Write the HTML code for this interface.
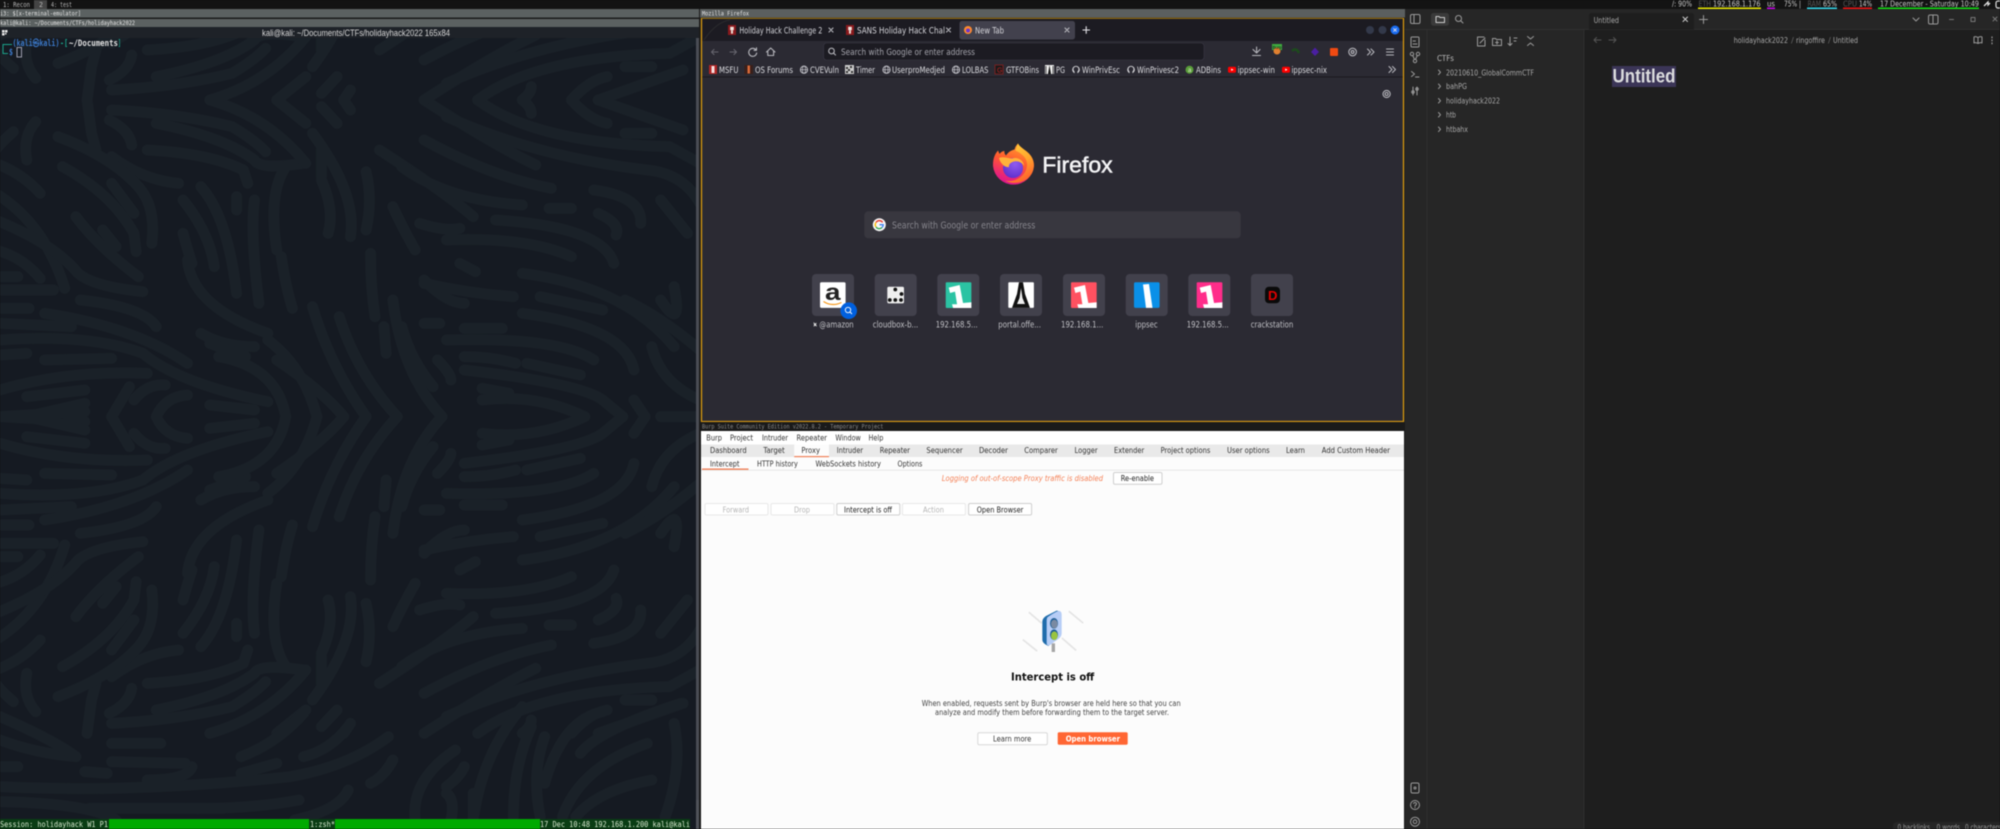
<!DOCTYPE html>
<html><head><meta charset="utf-8"><title>Desktop</title>
<style>
html,body{margin:0;padding:0;width:2000px;height:829px;overflow:hidden;background:#111}
svg{display:block;filter:blur(.4px)}
text{white-space:pre;font-family:"Liberation Sans",sans-serif}
.m{font-family:"DejaVu Sans Mono","Liberation Mono",monospace}
.d{font-family:"DejaVu Sans","Liberation Sans",sans-serif}
.fp path{fill:none;stroke:#1a2128;stroke-width:11;stroke-linecap:round;stroke-linejoin:round;vector-effect:non-scaling-stroke}
.ic{fill:none;stroke:#b5b5bb;stroke-width:1.1;stroke-linecap:round;stroke-linejoin:round}
.ob{fill:none;stroke:#9a9a9a;stroke-width:1;stroke-linecap:round;stroke-linejoin:round}
</style></head><body>
<svg width="2000" height="829" viewBox="0 0 2000 829" xmlns="http://www.w3.org/2000/svg">
<defs>
<clipPath id="tc"><rect x="0" y="38" width="696" height="782"/></clipPath>
<linearGradient id="ffb" x1="0.7" y1="0" x2="0.35" y2="1"><stop offset="0" stop-color="#ffa62f"/><stop offset=".45" stop-color="#ff5a2e"/><stop offset=".85" stop-color="#e8227a"/><stop offset="1" stop-color="#d9168f"/></linearGradient>
<linearGradient id="ffy" x1="0" y1="0" x2="0.4" y2="1"><stop offset="0" stop-color="#ffd23f"/><stop offset=".6" stop-color="#ffa52c"/><stop offset="1" stop-color="#ff6a2c"/></linearGradient>
<radialGradient id="ffp" cx=".6" cy=".3" r=".8"><stop offset="0" stop-color="#8f5bf0"/><stop offset="1" stop-color="#5a2bc8"/></radialGradient>
<g id="one"><path d="M9,16 L42,8 L52,62 L77,60 L77,77 L22,77 L19,66 L34,66 L28,28 L13,32 Z" fill="#fff"/></g>
<g id="globe"><circle cx="4" cy="4" r="3.6" fill="none" stroke="#c9c9cf" stroke-width=".9"/><ellipse cx="4" cy="4" rx="1.6" ry="3.6" fill="none" stroke="#c9c9cf" stroke-width=".7"/><path d="M.4,4H7.6" stroke="#c9c9cf" stroke-width=".7"/></g>
<g id="gh"><circle cx="4" cy="4" r="3.8" fill="#d5d5d8"/><circle cx="4" cy="3.6" r="2.5" fill="#2b2a33"/><rect x="2.6" y="5.2" width="2.8" height="3" fill="#2b2a33"/></g>
<g id="yt"><rect x="0" y="1" width="8" height="6" rx="1.5" fill="#f00"/><path d="M3.2,2.8 L5.6,4 L3.2,5.2Z" fill="#fff"/></g>
<g id="sans"><rect width="8" height="10" fill="#8a1a1d"/><rect x="2.2" y="1.8" width="3.6" height="3.4" fill="#f0e5e0"/><rect x="3" y="5.2" width="2" height="3.5" fill="#e8d8d0"/></g>
<g id="fp" class="fp">
<path d="M-10,190Q50,220 90,280"/><path d="M-10,280Q100,370 145,565"/><path d="M-10,360Q120,430 175,520Q210,560 320,575"/><path d="M-10,450Q50,470 90,535"/><path d="M195,0L205,100L215,150"/><path d="M80,65Q50,110 60,180"/><path d="M30,95Q0,130 -10,150"/><path d="M245,60Q290,90 295,135"/><path d="M250,30Q400,40 520,80Q570,120 595,155"/><path d="M350,70Q500,110 570,180Q580,210 680,190"/><path d="M330,150Q470,160 545,210L555,250"/><path d="M250,170Q320,240 400,250"/><path d="M130,110Q250,170 310,260Q350,320 340,430"/><path d="M140,200Q250,280 300,400L305,455"/><path d="M250,250L300,340"/><path d="M170,350Q220,440 310,530"/><path d="M230,390L260,440"/><path d="M410,300Q470,400 480,500"/><path d="M410,400Q420,450 430,490"/><path d="M450,260Q510,350 530,580"/><path d="M530,290L530,330"/><path d="M570,300Q560,400 580,610"/><path d="M640,200Q600,280 620,450"/><path d="M630,470Q640,560 655,625"/><path d="M720,150L720,230"/><path d="M720,240Q750,330 735,400"/><path d="M700,100Q800,280 785,410"/><path d="M820,215Q835,300 820,390"/><path d="M620,0L685,70"/><path d="M770,0L785,30"/><path d="M720,20L755,70"/><path d="M470,0Q600,50 685,190"/><path d="M880,320Q900,380 930,450"/><path d="M830,460Q830,560 840,650"/><path d="M860,680L865,760"/><path d="M950,0Q1100,130 1200,195"/><path d="M850,150Q1000,280 1060,350"/><path d="M1000,50Q1200,170 1450,210Q1530,220 1568,310"/><path d="M1070,0Q1200,130 1500,140L1568,190"/><path d="M950,120Q1100,230 1235,265"/><path d="M900,200Q1000,300 1170,315"/><path d="M940,370Q1000,395 1030,385"/><path d="M1110,360Q1350,380 1375,490"/><path d="M1000,420Q1180,410 1280,470"/><path d="M1230,325L1280,325"/><path d="M1330,270Q1440,290 1435,370"/><path d="M1340,340Q1390,370 1380,405"/><path d="M1480,300L1540,400"/><path d="M1170,0Q1190,20 1190,40"/><path d="M1280,0Q1320,60 1360,70"/><path d="M1340,0L1530,90"/><path d="M1400,100L1460,100"/><path d="M950,540Q1000,610 1040,610"/><path d="M950,550Q1050,580 1150,590"/><path d="M1170,520Q1400,560 1510,740"/><path d="M1210,590L1350,630"/><path d="M1170,640Q1400,680 1420,810"/><path d="M1000,720Q1250,710 1330,780"/><path d="M950,670L985,670"/><path d="M1040,685L1125,685"/><path d="M1040,770Q1100,770 1155,790"/><path d="M1180,790L1300,825"/><path d="M1040,810Q1300,850 1350,900L1395,950"/><path d="M1080,900Q1200,880 1310,950"/><path d="M1480,600Q1530,700 1510,560"/><path d="M1030,490L1065,515"/><path d="M1400,600Q1480,650 1568,750"/><path d="M1460,740Q1480,850 1568,900"/><path d="M1080,865L1140,880"/><path d="M1420,900L1445,950"/><path d="M1480,950L1568,950"/><path d="M700,620Q740,800 820,950"/><path d="M760,650Q800,820 890,950"/><path d="M620,780Q720,870 770,950"/><path d="M600,720Q680,800 710,950"/><path d="M880,600Q900,820 990,950"/><path d="M980,780Q1010,820 1010,840"/><path d="M900,680Q920,780 970,860"/><path d="M0,530L40,530"/><path d="M0,570L120,570"/><path d="M0,625L65,625"/><path d="M0,670L160,680"/><path d="M0,765L60,760"/><path d="M180,600Q320,620 350,680"/><path d="M100,640Q300,680 420,790"/><path d="M0,720Q200,700 320,760Q400,850 600,905"/><path d="M100,780L250,775"/><path d="M0,870Q150,810 330,820"/><path d="M60,890L190,870"/><path d="M60,950L190,910"/><path d="M300,900Q330,850 370,855"/><path d="M350,950Q370,890 420,885"/><path d="M250,950L290,860"/><path d="M470,915L570,930"/><path d="M420,480Q430,620 600,700"/><path d="M450,700Q500,740 570,740"/><path d="M470,730L550,770"/><path d="M490,770Q620,800 640,950"/><path d="M0,950L190,965"/>
</g>
</defs>

<!-- top i3 bar -->
<rect x="0" y="0" width="2000" height="9" fill="#131313"/>
<rect x="0" y="9" width="2000" height="820" fill="#1a1a1a"/>
<rect x="34" y="0" width="13" height="11" fill="#444"/><rect x="34" y="10" width="13" height="2" fill="#e0a020"/>
<rect x="0" y="0" width="34" height="11" fill="#131313"/><rect x="47" y="0" width="30" height="11" fill="#131313"/>
<g fill="#b5b5b5" font-size="7">
<text x="3" y="7" textLength="27" lengthAdjust="spacingAndGlyphs" class="m">1: Recon</text>
<text x="39" y="7" textLength="4" lengthAdjust="spacingAndGlyphs" class="m">2</text>
<text x="51" y="7" textLength="21" lengthAdjust="spacingAndGlyphs" class="m">4: test</text>
</g>
<g font-size="8" fill="#c8c8c8" class="d">
<text class="d" x="1672" y="6.5" textLength="20" lengthAdjust="spacingAndGlyphs">/: 90%</text>
<text class="d" x="1698.5" y="6.5" textLength="12.5" lengthAdjust="spacingAndGlyphs" fill="#555">ETH</text>
<text class="d" x="1713" y="6.5" textLength="47.5" lengthAdjust="spacingAndGlyphs">192.168.1.176</text>
<text class="d" x="1767" y="6.5" textLength="8" lengthAdjust="spacingAndGlyphs">us</text>
<text class="d" x="1784" y="6.5" textLength="17" lengthAdjust="spacingAndGlyphs">75% |</text>
<text class="d" x="1807.5" y="6.5" textLength="13.5" lengthAdjust="spacingAndGlyphs" fill="#555">RAM</text>
<text class="d" x="1823" y="6.5" textLength="14" lengthAdjust="spacingAndGlyphs">65%</text>
<text class="d" x="1843" y="6.5" textLength="14" lengthAdjust="spacingAndGlyphs" fill="#555">CPU</text>
<text class="d" x="1859" y="6.5" textLength="13" lengthAdjust="spacingAndGlyphs">14%</text>
<text class="d" x="1880" y="6.5" textLength="99" lengthAdjust="spacingAndGlyphs">17 December - Saturday 10:49</text>
</g>
<rect x="1698" y="7.5" width="63" height="1.5" fill="#e8e800"/>
<rect x="1767" y="7.5" width="8" height="1.5" fill="#c400e8"/>
<rect x="1807" y="7.5" width="30" height="1.5" fill="#33d4e8"/>
<rect x="1843" y="7.5" width="29" height="1.5" fill="#ee1111"/>
<rect x="1878" y="7.5" width="101" height="1.5" fill="#11dd11"/>
<path d="M1984,6L1988,2L1988,5L1990,3" stroke="#ddd" stroke-width="1.3" fill="none"/>
<rect x="1996" y="1" width="6" height="7" rx="2" fill="none" stroke="#ddd" stroke-width="1.2"/>

<!-- left terminal -->
<rect x="0" y="9" width="699" height="8.5" fill="#5b6161"/>
<text x="0" y="15.5" font-size="6.5" fill="#e3e3e3" class="m" textLength="81" lengthAdjust="spacingAndGlyphs">i3: $[x-terminal-emulator]</text>
<rect x="0" y="19" width="699" height="8" fill="#5b6161"/>
<text x="0" y="25" font-size="6.5" fill="#e3e3e3" class="m" textLength="135" lengthAdjust="spacingAndGlyphs">kali@kali: ~/Documents/CTFs/holidayhack2022</text>
<rect x="0" y="27" width="699" height="11" fill="#1e2228"/>
<rect x="0" y="38" width="699" height="782" fill="#151a22"/>
<g clip-path="url(#tc)">
<g transform="translate(0,100) scale(.44643,.33333)">
<use href="#fp"/>
<use href="#fp" transform="matrix(1 0 0 -1 0 1900)"/>
<use href="#fp" transform="matrix(1 0 0 -1 0 0)"/>
</g>
<g transform="translate(0,500) scale(.44643,.33333)" class="fp">
<path d="M0,860Q300,880 650,830Q780,800 870,710"/><path d="M1020,750Q920,840 930,960"/><path d="M1170,620Q1080,760 1060,960"/><path d="M1190,680Q1150,800 1150,950"/><path d="M1220,710Q1190,820 1210,950"/><path d="M1350,635Q1260,660 1220,850"/><path d="M1450,730Q1300,800 1260,950"/><path d="M1525,610Q1340,690 1300,760"/><path d="M1460,840Q1340,870 1290,950"/><path d="M1510,670Q1530,800 1490,950"/><path d="M680,640Q620,730 540,770"/><path d="M780,680Q740,750 680,770"/><path d="M620,790L540,820"/><path d="M430,800Q420,840 330,840"/><path d="M0,720Q80,760 170,770"/><path d="M0,650Q120,720 170,770"/><path d="M250,730L360,730"/><path d="M250,785L415,790"/><path d="M190,815L240,820"/><path d="M0,800L40,800"/><path d="M780,870Q760,930 660,960"/><path d="M670,900Q550,930 400,925"/><path d="M500,925L200,925"/><path d="M0,905Q200,910 260,960"/><path d="M1000,880Q1020,900 1010,960"/><path d="M1060,880L1060,960"/><path d="M1040,800Q1030,830 1000,860"/><path d="M880,780Q860,830 830,850"/>
</g>
</g>
<rect x="696" y="38" width="3" height="782" fill="#4a4d55"/>
<g fill="#e8e8e8"><rect x="2" y="30" width="2.5" height="2.5"/><rect x="5" y="30" width="2.5" height="2.5"/><rect x="2" y="33" width="2.5" height="2.5"/><rect x="5" y="33" width="1.5" height="1.5"/></g>
<text x="262" y="36" font-size="9" fill="#d6d6d6" textLength="188" lengthAdjust="spacingAndGlyphs">kali@kali: ~/Documents/CTFs/holidayhack2022 165x84</text>
<g font-size="8.5" class="m" font-weight="bold">
<text x="12.5" y="46" class="m" fill="#3b78c8" textLength="47" lengthAdjust="spacingAndGlyphs">(kali㉿kali)</text>
<text x="60" y="46" class="m" fill="#1aa38a" textLength="8" lengthAdjust="spacingAndGlyphs">-[</text>
<text x="69" y="46" class="m" fill="#e0e0e0" textLength="49" lengthAdjust="spacingAndGlyphs">~/Documents</text>
<text x="118" y="46" class="m" fill="#1aa38a" textLength="3" lengthAdjust="spacingAndGlyphs">]</text>
<text x="9" y="55" class="m" fill="#3b78c8" textLength="4" lengthAdjust="spacingAndGlyphs">$</text>
</g>
<path d="M3,49V44.5H12 M3,49V53.5H8" stroke="#1aa38a" stroke-width="1" fill="none"/>
<rect x="17" y="47.5" width="4.5" height="9.5" fill="none" stroke="#aab" stroke-width=".9"/>
<!-- tmux -->
<rect x="0" y="819" width="699" height="10" fill="#0a3d14"/>
<rect x="109" y="819" width="200" height="10" fill="#00aa00"/>
<rect x="335" y="819" width="205" height="10" fill="#00aa00"/>
<g font-size="7.5" fill="#d5e5cc">
<text x="0" y="827" class="m" textLength="108" lengthAdjust="spacingAndGlyphs">Session: holidayhack W1 P1</text>
<text x="310" y="827" class="m" textLength="25" lengthAdjust="spacingAndGlyphs">1:zsh*</text>
<text x="540" y="827" class="m" textLength="150" lengthAdjust="spacingAndGlyphs">17 Dec 10:48 192.168.1.200 kali@kali</text>
</g>
<rect x="690" y="819" width="9" height="10" fill="#151a22"/>
<rect x="696" y="800" width="3" height="29" fill="#50535a"/>

<!-- firefox -->
<rect x="700" y="9" width="705" height="8.5" fill="#5b5f5f"/>
<text x="702" y="15.5" font-size="6.5" fill="#e5e5e5" class="m" textLength="47" lengthAdjust="spacingAndGlyphs">Mozilla Firefox</text>
<rect x="701" y="18" width="703" height="403" fill="#2b2a33"/>
<rect x="701" y="18" width="703" height="23" fill="#1c1b22"/>
<path d="M704,40Q716,22 730,20" stroke="#2b2b2e" stroke-width="1" fill="none"/>
<rect x="701" y="41" width="703" height="20" fill="#2b2a33"/>
<rect x="701" y="61" width="703" height="16" fill="#2b2a33"/>
<rect x="701" y="76.5" width="703" height=".8" fill="#16151a"/>
<rect x="959.5" y="21" width="115.5" height="18.5" rx="2.5" fill="#42414d"/>
<use href="#sans" x="728" y="25"/><use href="#sans" x="846" y="25"/>
<circle cx="968" cy="30" r="4" fill="#ff8a2c"/><circle cx="968" cy="30.5" r="2" fill="#6a35d0"/>
<g font-size="9" fill="#d5d5da" class="d">
<text class="d" x="739.4" y="33.5" textLength="83" lengthAdjust="spacingAndGlyphs">Holiday Hack Challenge 2</text>
<text class="d" x="857" y="33.5" textLength="88" lengthAdjust="spacingAndGlyphs">SANS Holiday Hack Chal</text>
<text class="d" x="975" y="33.5" textLength="29" lengthAdjust="spacingAndGlyphs">New Tab</text>
</g>
<g class="ic" stroke-width=".9"><path d="M829,28L833,32M833,28L829,32M946.5,28L950.5,32M950.5,28L946.5,32M1065,28L1069,32M1069,28L1065,32"/></g>
<path d="M1082.5,30H1090M1086.2,26.2V33.8" stroke="#e4e4e8" stroke-width="1.1"/>
<circle cx="1370" cy="30" r="4" fill="#33394a"/><circle cx="1382.5" cy="30" r="4" fill="#33394a"/><circle cx="1395" cy="30" r="4.5" fill="#1a6cf0"/>
<path d="M1393.4,28.4L1396.6,31.6M1396.6,28.4L1393.4,31.6" stroke="#dde" stroke-width=".9"/>
<!-- nav -->
<g class="ic">
<path d="M718,52H711.5M714,49.5L711.5,52L714,54.5" stroke="#66656e"/>
<path d="M730,52H736.5M734,49.5L736.5,52L734,54.5" stroke="#66656e"/>
<path d="M756,50A4,4 0 1 0 756.7,53M756.5,47.8V50.3H754"/>
<path d="M766.5,52L770.7,48L775,52M767.8,51V55.5H773.6V51"/>
<path d="M1253,49.5L1256.6,53L1260,49.5M1256.6,47V53M1252.5,55.5H1260.5"/>
<circle cx="1352.6" cy="52" r="3.8"/><circle cx="1352.6" cy="52" r="1.4"/>
<path d="M1367.5,49L1370.5,52L1367.5,55M1371,49L1374,52L1371,55"/>
<path d="M1386.5,49H1393.5M1386.5,52H1393.5M1386.5,55H1393.5"/>
<path d="M1389,66.5L1392,69.5L1389,72.5M1392.5,66.5L1395.5,69.5L1392.5,72.5"/>
</g>
<rect x="823.6" y="43" width="380.4" height="17" rx="3" fill="#1c1b22" stroke="#3a3945" stroke-width=".6"/>
<g class="ic"><circle cx="831.5" cy="51" r="2.8"/><path d="M833.5,53L835.5,55"/></g>
<text class="d" x="841" y="55" font-size="9" fill="#a5a5ad" textLength="134" lengthAdjust="spacingAndGlyphs">Search with Google or enter address</text>
<rect x="1272" y="44" width="10" height="6" fill="#3faa3f"/><circle cx="1277" cy="51" r="3.5" fill="#e08030"/>
<text x="1272.5" y="49" font-size="4.5" fill="#111" textLength="9" lengthAdjust="spacingAndGlyphs">Burp</text>
<path d="M1292,51Q1296,47 1299,53" stroke="#1d4a1d" stroke-width="2.5" fill="none"/>
<path d="M1315,47.5L1319,52L1315,56L1311,52Z" fill="#4a1fa0"/>
<rect x="1330" y="48" width="8" height="8" rx="1" fill="#f04a12"/>
<!-- bookmarks -->
<g font-size="8.8" fill="#dcdce0">
<rect x="709" y="65" width="8" height="9" fill="#b02525"/><rect x="711.5" y="66" width="3" height="7" fill="#f5e0e0"/>
<text class="d" x="719" y="73" textLength="19.5" lengthAdjust="spacingAndGlyphs">MSFU</text>
<rect x="744.5" y="65" width="8.5" height="9" fill="#3a1f1a"/><rect x="747.5" y="65.5" width="2.5" height="8" fill="#d86a3a"/>
<text class="d" x="755" y="73" textLength="38" lengthAdjust="spacingAndGlyphs">OS Forums</text>
<use href="#globe" x="800" y="65.7"/><text class="d" x="810" y="73" textLength="29" lengthAdjust="spacingAndGlyphs">CVEVuln</text>
<rect x="845" y="65" width="9" height="9" fill="#ccc"/><path d="M846,67h2v2h-2zM850,66h2v2h-2zM848,69h2v2h-2zM851,71h2v2h-2zM846,71h2v2h-2z" fill="#333"/>
<text class="d" x="856" y="73" textLength="19" lengthAdjust="spacingAndGlyphs">Timer</text>
<use href="#globe" x="882.5" y="65.7"/><text class="d" x="892" y="73" textLength="53" lengthAdjust="spacingAndGlyphs">UserproMedjed</text>
<use href="#globe" x="952" y="65.7"/><text class="d" x="962" y="73" textLength="26.5" lengthAdjust="spacingAndGlyphs">LOLBAS</text>
<rect x="995" y="65" width="8" height="9" fill="#1a1a1a" stroke="#8a2020" stroke-width=".8"/><text x="997" y="72.5" font-size="7" fill="#b52020">G</text>
<text class="d" x="1006" y="73" textLength="33" lengthAdjust="spacingAndGlyphs">GTFOBins</text>
<rect x="1045" y="65" width="9" height="9" fill="#eee"/><path d="M1049.5,65L1048,74H1051Z" fill="#111"/><path d="M1046,66V74M1053,66V74" stroke="#111" stroke-width=".7"/>
<text class="d" x="1056" y="73" textLength="9" lengthAdjust="spacingAndGlyphs">PG</text>
<use href="#gh" x="1072" y="65.7"/><text class="d" x="1082" y="73" textLength="38" lengthAdjust="spacingAndGlyphs">WinPrivEsc</text>
<use href="#gh" x="1127" y="65.7"/><text class="d" x="1137" y="73" textLength="42" lengthAdjust="spacingAndGlyphs">WinPrivesc2</text>
<circle cx="1189.5" cy="69.7" r="4" fill="#5a9e3a"/><text x="1188" y="72" font-size="6" fill="#e0e8d0">a</text>
<text class="d" x="1196" y="73" textLength="25" lengthAdjust="spacingAndGlyphs">ADBins</text>
<use href="#yt" x="1228" y="65.7"/><text class="d" x="1237.6" y="73" textLength="37.4" lengthAdjust="spacingAndGlyphs">ippsec-win</text>
<use href="#yt" x="1282" y="65.7"/><text class="d" x="1291.5" y="73" textLength="35.5" lengthAdjust="spacingAndGlyphs">ippsec-nix</text>
</g>
<!-- gear -->
<g class="ic"><circle cx="1386.6" cy="94" r="3.6"/><circle cx="1386.6" cy="94" r="1.5"/></g>
<!-- logo -->
<path d="M993,165C993,158 995,154 998,150.5L999.5,154C1000.5,152.5 1002.5,151 1004.5,151C1004,153 1005,154.5 1006,155.5C1008,152.5 1010.5,150.5 1014.5,149.5C1015,147 1016.5,145 1018,143.5C1020,148 1027,150 1031,156C1033,159 1034,162 1034,166A20.6,20.6 0 0 1 993,166Z" fill="url(#ffb)"/>
<path d="M1018,143.5C1020,148 1028,151 1031.5,157C1035,163 1034.5,171 1030,176C1024,183 1013,185 1005,180.5C1015,183 1026,176 1027,166C1028,158 1021,153 1015.5,150.5Z" fill="url(#ffy)"/>
<circle cx="1013" cy="168" r="10" fill="url(#ffp)"/>
<path d="M999,158C1004,156 1008,158.5 1012,158.5C1018,156.5 1024,161 1024,166C1021,161 1016,160.5 1012.5,162C1010,163 1008.5,165 1009,167C1005,168 1000,163 999,158Z" fill="#ffb23a"/>
<text x="1042.3" y="172.7" font-size="22.5" fill="#f4f4f6" stroke="#f4f4f6" stroke-width=".5" textLength="70.4" lengthAdjust="spacingAndGlyphs">Firefox</text>
<!-- search -->
<rect x="864.3" y="211.3" width="376.4" height="27" rx="4" fill="#38373f"/>
<circle cx="879.3" cy="224.7" r="6.5" fill="#f7f7f7"/>
<path d="M882.6,222.4A3.9,3.9 0 0 0 876,222.5" stroke="#ea4335" stroke-width="1.4" fill="none"/>
<path d="M876,222.5A3.9,3.9 0 0 0 876,227" stroke="#fbbc05" stroke-width="1.4" fill="none"/>
<path d="M876,227A3.9,3.9 0 0 0 882,227.5" stroke="#34a853" stroke-width="1.4" fill="none"/>
<path d="M882,227.5A3.9,3.9 0 0 0 883.2,224.7H879.5" stroke="#4285f4" stroke-width="1.4" fill="none"/>
<text class="d" x="892" y="228.3" font-size="9.5" fill="#85848b" textLength="143.3" lengthAdjust="spacingAndGlyphs">Search with Google or enter address</text>
<!-- tiles -->
<g fill="#42414c">
<rect x="812" y="274" width="42" height="42" rx="4"/><rect x="874.7" y="274" width="42" height="42" rx="4"/><rect x="937.3" y="274" width="42" height="42" rx="4"/><rect x="1000" y="274" width="42" height="42" rx="4"/><rect x="1063" y="274" width="42" height="42" rx="4"/><rect x="1125.7" y="274" width="42" height="42" rx="4"/><rect x="1188.3" y="274" width="42" height="42" rx="4"/><rect x="1251" y="274" width="42" height="42" rx="4"/>
</g>
<rect x="820" y="282.3" width="25.6" height="25.6" rx="1.5" fill="#fff"/>
<text x="825" y="300" font-size="23" font-weight="bold" fill="#222" textLength="15.5" lengthAdjust="spacingAndGlyphs">a</text>
<path d="M823.5,301.5Q832,307 841.5,302.5" stroke="#f79a1e" stroke-width="1.2" fill="none"/>
<circle cx="848.7" cy="310.7" r="8.3" fill="#0060df"/><circle cx="848" cy="310" r="2.7" fill="none" stroke="#fff" stroke-width=".9"/><path d="M850,312L852,314" stroke="#fff" stroke-width=".9"/>
<rect x="887.3" y="286.7" width="16.7" height="16.7" rx="1.5" fill="#efefef"/>
<g fill="#111"><circle cx="895.3" cy="289.5" r="1.9"/><circle cx="901.5" cy="294" r="1.9"/><circle cx="889.8" cy="300" r="1.9"/><circle cx="895.3" cy="300" r="1.9"/><circle cx="901" cy="300" r="1.9"/></g>
<g transform="translate(945.7,282.3) scale(.3333)"><rect width="77" height="77" rx="3" fill="#2bc3a3"/><use href="#one"/></g>
<rect x="1008.3" y="282.3" width="25.6" height="25.6" rx="1" fill="#fff"/>
<path d="M1019,282.3H1023L1025,294L1030,307.9H1012L1017,294Z" fill="#111"/><path d="M1021,288L1019.5,298L1017,304H1025L1022.5,298Z" fill="#eee"/>
<g transform="translate(1071,282.3) scale(.3333)"><rect width="77" height="77" rx="3" fill="#ff5160"/><use href="#one"/></g>
<rect x="1134" y="282.3" width="25.6" height="25.6" rx="1.5" fill="#0a90e8"/><path d="M1143,284.5L1149,284L1152.5,307.9H1146Z" fill="#fff"/>
<g transform="translate(1196.7,282.3) scale(.3333)"><rect width="77" height="77" rx="3" fill="#ff2d8a"/><use href="#one"/></g>
<rect x="1265" y="286.7" width="15" height="16.6" rx="4" fill="#0a0a0a"/>
<text x="1268" y="300" font-size="13" font-weight="bold" fill="#e00000" textLength="9.5" lengthAdjust="spacingAndGlyphs">D</text>
<g font-size="8.6" fill="#c0c0c5">
<text class="d" x="819.3" y="327.3" textLength="34.4" lengthAdjust="spacingAndGlyphs">@amazon</text>
<text class="d" x="872.7" y="327.3" textLength="45.6" lengthAdjust="spacingAndGlyphs">cloudbox-b...</text>
<text class="d" x="935.7" y="327.3" textLength="42" lengthAdjust="spacingAndGlyphs">192.168.5...</text>
<text class="d" x="998.3" y="327.3" textLength="42.7" lengthAdjust="spacingAndGlyphs">portal.offe...</text>
<text class="d" x="1061" y="327.3" textLength="42.3" lengthAdjust="spacingAndGlyphs">192.168.1...</text>
<text class="d" x="1135.3" y="327.3" textLength="22.4" lengthAdjust="spacingAndGlyphs">ippsec</text>
<text class="d" x="1186.7" y="327.3" textLength="42" lengthAdjust="spacingAndGlyphs">192.168.5...</text>
<text class="d" x="1250.7" y="327.3" textLength="42.6" lengthAdjust="spacingAndGlyphs">crackstation</text>
</g>
<path d="M813.5,322L815,323.5L816.8,322.8L816,324.5L817,326.5L815,325.7L813.5,326.7L814,325Z" fill="#ddd"/>
<!-- orange border -->
<path d="M701.5,18V421.5H1403.5V18" fill="none" stroke="#d89a12" stroke-width="1.3"/>
<path d="M701.5,18.3H1403.5" fill="none" stroke="#b8860f" stroke-width=".8"/>

<!-- burp -->
<rect x="700" y="422" width="705" height="9" fill="#1a1a1a"/>
<text x="702" y="428.5" font-size="6.5" fill="#8a8a8a" class="m" textLength="181.4" lengthAdjust="spacingAndGlyphs">Burp Suite Community Edition v2022.8.2 - Temporary Project</text>
<rect x="701" y="431" width="703" height="398" fill="#fcfcfc"/>
<rect x="701" y="431" width="703" height="13.5" fill="#ffffff"/>
<rect x="701" y="444.5" width="703" height="12.5" fill="#e9e9e9"/>
<rect x="794.2" y="444.5" width="34.8" height="12.5" fill="#fcfcfc"/>
<rect x="794.2" y="456" width="34.8" height="1.2" fill="#f0815a"/>
<rect x="701" y="469.8" width="703" height=".8" fill="#e2e2e2"/>
<rect x="702" y="468.5" width="46.5" height="1.3" fill="#f0794f"/>
<g font-size="8.3" fill="#333" class="d">
<text class="d" x="706.3" y="440.3" textLength="15.7" lengthAdjust="spacingAndGlyphs">Burp</text>
<text class="d" x="730" y="440.3" textLength="23" lengthAdjust="spacingAndGlyphs">Project</text>
<text class="d" x="762" y="440.3" textLength="26" lengthAdjust="spacingAndGlyphs">Intruder</text>
<text class="d" x="796.5" y="440.3" textLength="30.5" lengthAdjust="spacingAndGlyphs">Repeater</text>
<text class="d" x="835.4" y="440.3" textLength="25.4" lengthAdjust="spacingAndGlyphs">Window</text>
<text class="d" x="868.5" y="440.3" textLength="14.9" lengthAdjust="spacingAndGlyphs">Help</text>
<text class="d" x="710" y="453" textLength="36.6" lengthAdjust="spacingAndGlyphs">Dashboard</text>
<text class="d" x="763.4" y="453" textLength="21.3" lengthAdjust="spacingAndGlyphs">Target</text>
<text class="d" x="801.4" y="453" textLength="18.6" lengthAdjust="spacingAndGlyphs">Proxy</text>
<text class="d" x="836.8" y="453" textLength="26.2" lengthAdjust="spacingAndGlyphs">Intruder</text>
<text class="d" x="879.8" y="453" textLength="30.2" lengthAdjust="spacingAndGlyphs">Repeater</text>
<text class="d" x="926.4" y="453" textLength="36.3" lengthAdjust="spacingAndGlyphs">Sequencer</text>
<text class="d" x="979" y="453" textLength="29" lengthAdjust="spacingAndGlyphs">Decoder</text>
<text class="d" x="1024.3" y="453" textLength="33.5" lengthAdjust="spacingAndGlyphs">Comparer</text>
<text class="d" x="1074.5" y="453" textLength="23.1" lengthAdjust="spacingAndGlyphs">Logger</text>
<text class="d" x="1114" y="453" textLength="30.3" lengthAdjust="spacingAndGlyphs">Extender</text>
<text class="d" x="1160.6" y="453" textLength="49.8" lengthAdjust="spacingAndGlyphs">Project options</text>
<text class="d" x="1227" y="453" textLength="42.7" lengthAdjust="spacingAndGlyphs">User options</text>
<text class="d" x="1286" y="453" textLength="19" lengthAdjust="spacingAndGlyphs">Learn</text>
<text class="d" x="1321.8" y="453" textLength="68.2" lengthAdjust="spacingAndGlyphs">Add Custom Header</text>
<text class="d" x="710" y="466.3" textLength="29.4" lengthAdjust="spacingAndGlyphs">Intercept</text>
<text class="d" x="757" y="466.3" textLength="40.8" lengthAdjust="spacingAndGlyphs">HTTP history</text>
<text class="d" x="815.5" y="466.3" textLength="65.5" lengthAdjust="spacingAndGlyphs">WebSockets history</text>
<text class="d" x="897.5" y="466.3" textLength="24.9" lengthAdjust="spacingAndGlyphs">Options</text>
</g>
<text class="d" x="941.8" y="481.2" font-size="8.3" font-style="italic" fill="#f58258" textLength="161.2" lengthAdjust="spacingAndGlyphs">Logging of out-of-scope Proxy traffic is disabled</text>
<rect x="1113.5" y="472.5" width="48.5" height="11.8" rx="1.5" fill="#fff" stroke="#cfcfcf" stroke-width="1"/>
<text class="d" x="1120.7" y="481.2" font-size="8.3" fill="#222" textLength="33.3" lengthAdjust="spacingAndGlyphs">Re-enable</text>
<g fill="#fff" stroke-width="1">
<rect x="705" y="503.5" width="63" height="11.5" rx="1.5" stroke="#e8e8e8"/>
<rect x="771" y="503.5" width="63" height="11.5" rx="1.5" stroke="#e8e8e8"/>
<rect x="836.8" y="503.5" width="63" height="11.5" rx="1.5" stroke="#cfcfcf"/>
<rect x="902.4" y="503.5" width="63" height="11.5" rx="1.5" stroke="#e8e8e8"/>
<rect x="968.6" y="503.5" width="63" height="11.5" rx="1.5" stroke="#cfcfcf"/>
</g>
<g font-size="8.3" class="d">
<text class="d" x="722.6" y="512.3" fill="#b5b5b5" textLength="26.4" lengthAdjust="spacingAndGlyphs">Forward</text>
<text class="d" x="794" y="512.3" fill="#b5b5b5" textLength="16" lengthAdjust="spacingAndGlyphs">Drop</text>
<text class="d" x="844" y="512.3" fill="#222" textLength="48" lengthAdjust="spacingAndGlyphs">Intercept is off</text>
<text class="d" x="923" y="512.3" fill="#b5b5b5" textLength="21" lengthAdjust="spacingAndGlyphs">Action</text>
<text class="d" x="976.7" y="512.3" fill="#222" textLength="46.7" lengthAdjust="spacingAndGlyphs">Open Browser</text>
</g>
<!-- traffic light -->
<g transform="translate(900,590) scale(.33333)">
<g stroke="#e4e4e4" stroke-width="5" stroke-linecap="round"><path d="M388,68L423,98M508,65L548,98M370,150L410,182M487,145L527,180"/></g>
<rect x="455" y="160" width="10" height="26" fill="#a5a5a5"/>
<path d="M427,95Q427,85 438,78L470,62L480,64V140L445,168Q427,160 427,150Z" fill="#1f6cab"/>
<path d="M442,82Q470,62 478,63Q485,64 485,74V130Q485,140 475,147L450,165Q440,170 440,158V92Q440,86 442,82Z" fill="#b6cdf6"/>
<ellipse cx="462" cy="100" rx="12" ry="16" fill="#1f5f96"/><ellipse cx="463" cy="102" rx="10" ry="13" fill="#7a8aa2"/>
<ellipse cx="462" cy="134" rx="12" ry="16" fill="#1f5f96"/><ellipse cx="463" cy="137" rx="10" ry="13" fill="#9ac440"/>
</g>
<text x="1011" y="680.7" font-size="11" font-weight="bold" class="d" fill="#111" textLength="83.3" lengthAdjust="spacingAndGlyphs">Intercept is off</text>
<g font-size="8" fill="#444" class="d">
<text class="d" x="921.7" y="706" textLength="259" lengthAdjust="spacingAndGlyphs">When enabled, requests sent by Burp's browser are held here so that you can</text>
<text class="d" x="935" y="715" textLength="234" lengthAdjust="spacingAndGlyphs">analyze and modify them before forwarding them to the target server.</text>
</g>
<rect x="977.8" y="732.8" width="69.5" height="12" rx="1.5" fill="#fff" stroke="#d8d8d8" stroke-width="1"/>
<rect x="1057.7" y="732.3" width="70" height="12.5" rx="1.5" fill="#ff6633"/>
<text class="d" x="993" y="741.5" font-size="8.3" fill="#333" textLength="38.3" lengthAdjust="spacingAndGlyphs">Learn more</text>
<text class="d" x="1065.7" y="741.5" font-size="8.3" font-weight="bold" fill="#fff" textLength="54.3" lengthAdjust="spacingAndGlyphs">Open browser</text>

<!-- obsidian -->
<rect x="1405" y="9" width="595" height="820" fill="#1e1e1e"/>
<rect x="1405" y="9" width="179" height="820" fill="#262626"/>
<rect x="1405" y="9" width="595" height="20.3" fill="#262626"/>
<rect x="1426.6" y="29" width=".8" height="800" fill="#333"/>
<rect x="1405" y="29" width="595" height=".8" fill="#333"/>
<rect x="1583.5" y="29" width=".8" height="800" fill="#333"/>
<path d="M1589,29.5V16Q1589,13 1592,13H1691Q1694,13 1694,16V29.5Z" fill="#1e1e1e"/>
<rect x="1431" y="13" width="18" height="12.7" rx="2.5" fill="#3a3a3a"/>
<g class="ob">
<rect x="1410.5" y="14.5" width="9.5" height="9" rx="1.5"/><path d="M1414,14.5V23.5"/>
<path d="M1436,16.5H1439L1440,17.5H1444.5V22.5H1436Z" stroke="#ccc"/>
<circle cx="1458.5" cy="18.5" r="3"/><path d="M1461,21L1463,23"/>
<path d="M1683,17L1687.5,21.5M1687.5,17L1683,21.5" stroke="#ccc"/>
<path d="M1699.5,19.5H1707.5M1703.5,15.5V23.5"/>
<path d="M1913,18L1916,21L1919,18"/>
<rect x="1928.5" y="15" width="9.5" height="9" rx="1.5"/><path d="M1933,15V24"/>
<path d="M1949.5,19.5H1953.5" stroke="#777"/><rect x="1971" y="17.5" width="4" height="4" stroke="#777"/><path d="M1993,17L1997,21M1997,17L1993,21" stroke="#777"/>
<path d="M1601,40H1594M1596.5,37.5L1594,40L1596.5,42.5" stroke="#555"/><path d="M1609,40H1616M1613.5,37.5L1616,40L1613.5,42.5" stroke="#555"/>
<path d="M1978,37.5Q1975.5,36 1974,37V43Q1975.5,42 1978,43.5Q1980.5,42 1982,43V37Q1980.5,36 1978,37.5V43.5"/>
<path d="M1992,37V37.8M1992,40V40.8M1992,43V43.8" stroke-width="1.2"/>
<rect x="1411" y="37" width="8" height="10" rx="1"/><path d="M1413,41H1415.5M1413,44H1417"/>
<circle cx="1412" cy="54" r="1.7"/><circle cx="1418" cy="54" r="1.7"/><circle cx="1415" cy="61" r="1.7"/><path d="M1412.8,55.5L1414.5,59.5M1417.2,55.5L1415.5,59.5"/>
<path d="M1411.5,71.5L1414.5,74L1411.5,76.5M1415.5,77H1419"/>
<path d="M1413,87V95M1417,87V95"/><circle cx="1413" cy="92" r="1.3"/><circle cx="1417" cy="89" r="1.3"/>
<path d="M1484,37H1477.5V46H1485V40M1480,43L1485,38"/>
<path d="M1492.5,38.5H1495.5L1496.5,39.5H1501.5V45.5H1492.5ZM1497,41V44M1495.5,42.5H1498.5"/>
<path d="M1510,37V45.5M1510,45.5L1508,43.5M1510,45.5L1512,43.5M1514,38H1517M1514,41H1516"/>
<path d="M1527.5,36.5L1530.5,39L1533.5,36.5M1527.5,45.5L1530.5,43L1533.5,45.5"/>
<rect x="1411" y="783" width="8" height="10" rx="1.5"/><circle cx="1415" cy="788" r="1"/>
<circle cx="1415" cy="805" r="4.5"/><path d="M1413.5,803.5Q1415,801.5 1416.5,803.5Q1416.5,805 1415,805.5V806M1415,807.3V807.6"/>
<circle cx="1415" cy="821.7" r="4.5"/><circle cx="1415" cy="821.7" r="1.8"/>
</g>
<g class="ob" stroke="#8a8a8a"><path d="M1438.5,70L1440.5,72.3L1438.5,74.6M1438.5,84L1440.5,86.3L1438.5,88.6M1438.5,98.5L1440.5,100.8L1438.5,103M1438.5,112.5L1440.5,114.8L1438.5,117M1438.5,127L1440.5,129.3L1438.5,131.6"/></g>
<g font-size="8.3" fill="#a8a8a8" class="d">
<text class="d" x="1593.6" y="23" textLength="25.4" lengthAdjust="spacingAndGlyphs">Untitled</text>
<text class="d" x="1733.7" y="43" textLength="54.3" lengthAdjust="spacingAndGlyphs">holidayhack2022</text>
<text class="d" x="1791" y="43" fill="#666">/</text>
<text class="d" x="1796" y="43" textLength="29" lengthAdjust="spacingAndGlyphs">ringoffire</text>
<text class="d" x="1828" y="43" fill="#666">/</text>
<text class="d" x="1833" y="43" textLength="25" lengthAdjust="spacingAndGlyphs">Untitled</text>
<text class="d" x="1437" y="61" textLength="17" lengthAdjust="spacingAndGlyphs" fill="#bbb">CTFs</text>
<text class="d" x="1446" y="75.3" textLength="88" lengthAdjust="spacingAndGlyphs">20210610_GlobalCommCTF</text>
<text class="d" x="1446" y="89" textLength="21" lengthAdjust="spacingAndGlyphs">bahPG</text>
<text class="d" x="1446" y="103.7" textLength="54" lengthAdjust="spacingAndGlyphs">holidayhack2022</text>
<text class="d" x="1446" y="117.7" textLength="10" lengthAdjust="spacingAndGlyphs">htb</text>
<text class="d" x="1446" y="132" textLength="22" lengthAdjust="spacingAndGlyphs">htbahx</text>
</g>
<rect x="1612" y="66" width="64" height="21" fill="#3b3557"/>
<text x="1612.5" y="82.5" font-size="19" font-weight="bold" fill="#dcddde" textLength="63" lengthAdjust="spacingAndGlyphs">Untitled</text>
<path d="M1893,829V826Q1893,822 1897,822H2000V829Z" fill="#262626"/>
<g font-size="7.5" fill="#999" class="d">
<text class="d" x="1897.5" y="830" textLength="32.5" lengthAdjust="spacingAndGlyphs">0 backlinks</text>
<text class="d" x="1936.5" y="830" textLength="23.5" lengthAdjust="spacingAndGlyphs">0 words</text>
<text class="d" x="1965" y="830" textLength="36" lengthAdjust="spacingAndGlyphs">0 characters</text>
</g>
</svg>
</body></html>
